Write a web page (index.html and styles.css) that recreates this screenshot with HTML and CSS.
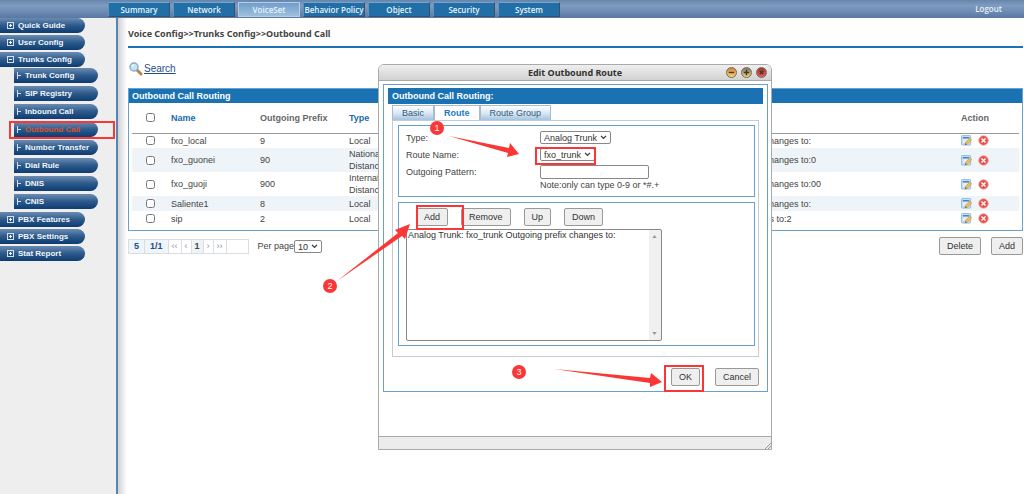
FILE: index.html
```html
<!DOCTYPE html>
<html lang="en">
<head>
  <meta charset="UTF-8">
  <meta name="viewport" content="width=device-width, initial-scale=1.0">
  <title>Outbound Call</title>
  <link rel="stylesheet" href="styles.css">
</head>
<body>
  <svg class="defs" width="0" height="0" aria-hidden="true">
    <symbol id="icon-edit" viewBox="0 0 12 12">
      <rect x="0.5" y="0.5" width="10" height="10.5" rx="1" fill="#c5def3" stroke="#8db8de"/>
      <path d="M2 3h7" stroke="#3f7fc4" stroke-width="1.5"/>
      <path d="M2 5.5h5M2 7.5h3" stroke="#fff"/>
      <path d="M4.5 10.5l.7-2.7 4.5-4.3 2 1.8-4.6 4.5z" fill="#f2c14e" stroke="#b98a35" stroke-width=".6"/>
      <path d="M4.2 11l.8-2 1.3 1.3z" fill="#6d563c"/>
    </symbol>
    <symbol id="icon-delete" viewBox="0 0 12 12">
      <circle cx="6" cy="6" r="5.2" fill="#e9514d" stroke="#f39a96" stroke-width=".8"/>
      <path d="M3.8 3.8l4.4 4.4M8.2 3.8L3.8 8.2" stroke="#fff" stroke-width="1.5"/>
    </symbol>
  </svg>

  <header class="topbar">
    <nav class="tabs">
      <a href="#">Summary</a>
      <a href="#">Network</a>
      <a href="#" class="active">VoiceSet</a>
      <a href="#">Behavior Policy</a>
      <a href="#">Object</a>
      <a href="#">Security</a>
      <a href="#">System</a>
    </nav>
    <a href="#" class="logout">Logout</a>
  </header>

  <div class="layout">
    <!-- Side menu -->
    <aside class="sidebar">
      <ul class="menu">
        <li><a href="#"><span class="box plus"></span>Quick Guide</a></li>
        <li><a href="#"><span class="box plus"></span>User Config</a></li>
        <li><a href="#"><span class="box"></span>Trunks Config</a>
          <ul class="submenu">
            <li><a href="#"><span class="branch"></span>Trunk Config</a></li>
            <li><a href="#"><span class="branch"></span>SIP Registry</a></li>
            <li><a href="#"><span class="branch"></span>Inbound Call</a></li>
            <li><a href="#" class="current"><span class="branch"></span>Outbound Call</a></li>
            <li><a href="#"><span class="branch"></span>Number Transfer</a></li>
            <li><a href="#"><span class="branch"></span>Dial Rule</a></li>
            <li><a href="#"><span class="branch"></span>DNIS</a></li>
            <li><a href="#"><span class="branch"></span>CNIS</a></li>
          </ul>
        </li>
        <li><a href="#"><span class="box plus"></span>PBX Features</a></li>
        <li><a href="#"><span class="box plus"></span>PBX Settings</a></li>
        <li><a href="#"><span class="box plus"></span>Stat Report</a></li>
      </ul>
    </aside>

    <main class="content">
      <h1>Voice Config&gt;&gt;Trunks Config&gt;&gt;Outbound Call</h1>

      <a href="#" class="search">
        <svg width="14" height="14" viewBox="0 0 14 14" aria-hidden="true">
          <path d="M7.5 7.5l4.5 4.5" stroke="#b98545" stroke-width="3" stroke-linecap="round"/>
          <circle cx="5" cy="5" r="4" fill="#c3e4fa" stroke="#8ba9c4" stroke-width="1.4"/>
          <path d="M3 5a2 2 0 0 1 2-2" stroke="#fff" fill="none"/>
        </svg>
        <span>Search</span>
      </a>

      <!-- Route list -->
      <section class="panel">
        <h2>Outbound Call Routing</h2>
        <div class="panel-body">
          <table>
            <colgroup>
              <col class="c-check"><col class="c-name"><col class="c-prefix"><col class="c-type"><col><col class="c-action">
            </colgroup>
            <thead>
              <tr>
                <th class="check"><input type="checkbox" aria-label="Select all"></th>
                <th class="sort">Name</th>
                <th>Outgoing Prefix</th>
                <th class="sort">Type</th>
                <th></th>
                <th>Action</th>
              </tr>
            </thead>
            <tbody>
              <tr>
                <td class="check"><input type="checkbox" aria-label="fxo_local"></td>
                <td>fxo_local</td><td>9</td><td>Local</td>
                <td class="rule">prefix changes to:</td>
                <td><div class="actions"><button aria-label="Edit"><svg><use href="#icon-edit"/></svg></button><button aria-label="Delete"><svg><use href="#icon-delete"/></svg></button></div></td>
              </tr>
              <tr class="tall">
                <td class="check"><input type="checkbox" aria-label="fxo_guonei"></td>
                <td>fxo_guonei</td><td>90</td><td>National Distance</td>
                <td class="rule">prefix changes to:0</td>
                <td><div class="actions"><button aria-label="Edit"><svg><use href="#icon-edit"/></svg></button><button aria-label="Delete"><svg><use href="#icon-delete"/></svg></button></div></td>
              </tr>
              <tr class="tall">
                <td class="check"><input type="checkbox" aria-label="fxo_guoji"></td>
                <td>fxo_guoji</td><td>900</td><td>International Distance</td>
                <td class="rule">prefix changes to:00</td>
                <td><div class="actions"><button aria-label="Edit"><svg><use href="#icon-edit"/></svg></button><button aria-label="Delete"><svg><use href="#icon-delete"/></svg></button></div></td>
              </tr>
              <tr>
                <td class="check"><input type="checkbox" aria-label="Saliente1"></td>
                <td>Saliente1</td><td>8</td><td>Local</td>
                <td class="rule">prefix changes to:</td>
                <td><div class="actions"><button aria-label="Edit"><svg><use href="#icon-edit"/></svg></button><button aria-label="Delete"><svg><use href="#icon-delete"/></svg></button></div></td>
              </tr>
              <tr>
                <td class="check"><input type="checkbox" aria-label="sip"></td>
                <td>sip</td><td>2</td><td>Local</td>
                <td class="rule">changes to:2</td>
                <td><div class="actions"><button aria-label="Edit"><svg><use href="#icon-edit"/></svg></button><button aria-label="Delete"><svg><use href="#icon-delete"/></svg></button></div></td>
              </tr>
            </tbody>
          </table>
        </div>
      </section>

      <div class="list-footer">
        <div class="pager">
          <span class="info">5</span>
          <span class="info pages">1/1</span>
          <a href="#">‹‹</a>
          <a href="#">‹</a>
          <span class="page">1</span>
          <a href="#">›</a>
          <a href="#">››</a>
          <input type="text" aria-label="Go to page">
        </div>
        <label class="per-page">Per page<select><option>10</option></select></label>
        <div class="list-buttons">
          <button class="btn">Delete</button>
          <button class="btn">Add</button>
        </div>
      </div>
    </main>
  </div>

  <!-- Edit window -->
  <div class="dialog" role="dialog" aria-labelledby="dialog-title">
    <div class="dialog-title">
      <h2 id="dialog-title">Edit Outbound Route</h2>
      <div class="window-buttons">
        <button class="min" aria-label="Minimize"><svg viewBox="0 0 10 10"><path d="M2 5h6" /></svg></button>
        <button class="max" aria-label="Maximize"><svg viewBox="0 0 10 10"><path d="M2 5h6M5 2v6" /></svg></button>
        <button class="close" aria-label="Close"><svg viewBox="0 0 10 10"><path d="M3 3l4 4M7 3L3 7" /></svg></button>
      </div>
    </div>
    <div class="dialog-body">
      <div class="route-form">
        <h3>Outbound Call Routing:</h3>
        <div class="route-tabs">
          <button>Basic</button>
          <button class="active">Route</button>
          <button>Route Group</button>
        </div>
        <div class="tab-panel">
          <div class="group fields">
            <label for="type">Type:</label>
            <select id="type"><option>Analog Trunk</option></select>
            <label for="route-name">Route Name:</label>
            <select id="route-name"><option>fxo_trunk</option></select>
            <label for="pattern">Outgoing Pattern:</label>
            <input type="text" id="pattern">
            <span class="note">Note:only can type 0-9 or *#.+</span>
          </div>
          <div class="group routes">
            <div class="route-buttons">
              <button class="btn">Add</button>
              <button class="btn">Remove</button>
              <button class="btn">Up</button>
              <button class="btn">Down</button>
            </div>
            <select class="route-list" size="8" aria-label="Routes">
              <option>Analog Trunk: fxo_trunk Outgoing prefix changes to:</option>
            </select>
          </div>
        </div>
        <div class="dialog-buttons">
          <button class="btn">OK</button>
          <button class="btn">Cancel</button>
        </div>
      </div>
    </div>
    <div class="dialog-status">
      <svg width="6" height="6" viewBox="0 0 6 6" aria-hidden="true"><path d="M0 6L6 0M3 6l3-3" stroke="#999"/></svg>
    </div>
  </div>

  <!-- Step marks -->
  <svg class="marks" width="1024" height="494" viewBox="0 0 1024 494">
    <g fill="none" stroke="#fb3636" stroke-width="2">
      <rect x="10" y="122" width="104" height="16"/>
      <rect x="536" y="148" width="59" height="16"/>
      <rect x="417" y="206" width="46" height="23"/>
      <rect x="665" y="366" width="38" height="25"/>
    </g>
    <g fill="#fb3636">
      <path d="M449 136l60 12 1-5 9 11-12 3 1-4z"/>
      <path d="M337 281l61-48-3-3 15-6-5 15-3-3z"/>
      <path d="M554 369l96 9 1-5 11 9-12 5v-4z"/>
      <circle cx="437" cy="128" r="7"/>
      <circle cx="330" cy="286" r="7"/>
      <circle cx="519" cy="372" r="7"/>
    </g>
    <g class="mark-text">
      <text x="437" y="131">1</text>
      <text x="330" y="289">2</text>
      <text x="519" y="375">3</text>
    </g>
  </svg>
</body>
</html>
```
FILE: styles.css
```css
* {
  box-sizing: border-box;
}

body {
  margin: 0;
  min-height: 100vh;
  display: flex;
  flex-direction: column;
  position: relative;
  font-family: "Liberation Sans", Arial, sans-serif;
  font-size: 9px;
  line-height: 12px;
  color: #444;
  background: #fff;
}

h1, h2, h3, ul {
  margin: 0;
  padding: 0;
}

ul {
  list-style: none;
}

a {
  text-decoration: none;
}

button, input, select {
  font: inherit;
  color: #333;
  margin: 0;
}

.defs {
  position: absolute;
}

/* Top bar */
.topbar {
  display: flex;
  justify-content: space-between;
  align-items: center;
  height: 18px;
  padding: 0 22px 0 108px;
  background: linear-gradient(#6886ad, #7d9bc0 30%, #7391b8 55%, #5878a2);
  font-family: "Open Sans", "Noto Sans", sans-serif;
  font-weight: 600;
  font-size: 8px;
}

.tabs {
  display: flex;
  gap: 3px;
}

.tabs a {
  width: 62px;
  height: 15px;
  line-height: 13px;
  text-align: center;
  white-space: nowrap;
  color: #e8f3fb;
  background: #216fa6;
  border: 1px solid #3a4f68;
  border-top-color: #71a5c9;
  border-left-color: #5f95bd;
}

.tabs a.active {
  background: linear-gradient(#6f9fcb, #9dbfdc);
  border-color: #b4cde2;
}

.logout {
  color: #e8f0f8;
}

/* Side menu */
.layout {
  display: flex;
  flex: 1;
}

.sidebar {
  width: 118px;
  flex: none;
  background: #eee;
  border-right: 2px solid #5386bb;
}

.menu > li {
  margin-bottom: 2px;
}

.menu a {
  display: flex;
  align-items: center;
  gap: 4px;
  width: 85px;
  height: 15px;
  padding-left: 7px;
  border-radius: 0 8px 8px 0;
  background: linear-gradient(#6c8cb1, #2c5a8c 50%, #0f3c70);
  color: #f2f6fa;
  font-size: 8px;
  font-weight: bold;
}

.submenu {
  display: grid;
  gap: 3px;
  padding: 1px 0 1px 14px;
}

.menu .submenu a {
  width: 84px;
  padding-left: 3px;
}

.menu .submenu a.current {
  color: #d8512c;
}

.box {
  width: 7px;
  height: 7px;
  border: 1px solid #d5dfeb;
  background: linear-gradient(#fff, #fff) center / 3px 1px no-repeat;
}

.box.plus {
  background: linear-gradient(#fff, #fff) center / 3px 1px no-repeat, linear-gradient(#fff, #fff) center / 1px 3px no-repeat;
}

.branch {
  width: 4px;
  height: 7px;
  border-left: 1px solid #d5dfeb;
  background: linear-gradient(#d5dfeb, #d5dfeb) center / 4px 1px no-repeat;
}

/* Content */
.content {
  flex: 1;
  min-width: 0;
  padding: 0 1px 0 10px;
  background: linear-gradient(90deg, #d2d2d2, #fff) left / 9px 100% no-repeat;
}

h1 {
  padding: 10px 0 6px;
  border-bottom: 2px solid #1a72b2;
  font-family: "Noto Sans", sans-serif;
  font-size: 9px;
  line-height: 12px;
}

.search {
  display: flex;
  align-items: center;
  gap: 1px;
  margin: 14px 1px 12px;
  color: #1f4e8c;
  font-size: 10px;
  line-height: 14px;
}

.search span {
  text-decoration: underline;
}

.panel {
  border: 1px solid #66a1d0;
}

.panel h2,
.route-form h3 {
  padding: 0 3px;
  background: #1a72b2;
  color: #fff;
  font-size: 9px;
  line-height: 14px;
}

.panel-body {
  padding: 0 3px 4px;
}

table {
  width: 100%;
  table-layout: fixed;
  border-collapse: collapse;
}

.c-check { width: 36px; }
.c-name, .c-prefix { width: 89px; }
.c-type { width: 64px; }
.c-action { width: 61px; }

th, td {
  height: 15px;
  padding: 0 3px;
  text-align: left;
  vertical-align: middle;
}

th {
  height: 30px;
  color: #666;
  border-bottom: 1px solid #999;
}

th.sort {
  color: #1a6aa8;
}

.tall td {
  height: 24px;
}

tbody tr:nth-child(even) {
  background: #eff4f9;
}

.check {
  text-align: center;
}

input[type="checkbox"] {
  display: block;
  width: 9px;
  height: 9px;
  margin: 0 auto;
}

td.rule {
  padding-left: 330px;
  white-space: nowrap;
}

.actions {
  display: flex;
  gap: 6px;
}

.actions button {
  width: 11px;
  height: 11px;
  padding: 0;
  border: 0;
  background: none;
}

.actions svg {
  display: block;
  width: 11px;
  height: 11px;
}

.list-footer {
  display: flex;
  align-items: center;
  padding-top: 6px;
}

.pager {
  display: flex;
  height: 15px;
  border: 1px solid #ddd;
  line-height: 13px;
  font-weight: bold;
}

.pager > * {
  padding: 0 3px;
  border-right: 1px solid #ddd;
}

.pager .info {
  background: #eef6fc;
  color: #1d4f85;
  padding: 0 5px;
}

.pager a {
  color: #8093ad;
  font-weight: normal;
}

.pager .page {
  background: #eef3f7;
}

.pager input {
  width: 21px;
  height: 13px;
  border: 0;
}

.per-page {
  display: flex;
  align-items: center;
  margin-left: 9px;
}

.list-buttons {
  display: flex;
  gap: 10px;
  margin-left: auto;
}

.btn {
  height: 18px;
  padding: 0 7px;
  border: 1px solid #999;
  border-radius: 2px;
  background: #efefef;
}

select {
  appearance: none;
  height: 13px;
  padding: 0 12px 0 3px;
  border: 1px solid #888;
  border-radius: 2px;
  background: #fff url("data:image/svg+xml,%3Csvg xmlns='http://www.w3.org/2000/svg' viewBox='0 0 8 6'%3E%3Cpath d='M1 1l3 3 3-3' fill='none' stroke='%23333' stroke-width='1.5'/%3E%3C/svg%3E") right 3px center / 7px 5px no-repeat;
}

/* Edit window */
.dialog {
  position: absolute;
  left: 378px;
  top: 64px;
  width: 394px;
  border: 1px solid #aaa;
  border-radius: 6px 6px 0 0;
  background: #fff;
}

.dialog-title {
  display: grid;
  grid-template-columns: 1fr auto 1fr;
  align-items: center;
  height: 16px;
  padding: 0 4px;
  border-bottom: 1px solid #aaa;
  border-radius: 5px 5px 0 0;
  background: linear-gradient(#efefef, #d2d2d2);
}

.dialog-title h2 {
  grid-column: 2;
  font-family: "Noto Sans", sans-serif;
  font-size: 9px;
  line-height: 14px;
  color: #333;
}

.window-buttons {
  display: flex;
  justify-content: flex-end;
  gap: 4px;
}

.window-buttons button {
  width: 11px;
  height: 11px;
  padding: 0;
  border: 1px solid #7c6a56;
  border-radius: 50%;
}

.window-buttons svg {
  display: block;
  stroke: #4d3520;
  stroke-width: 1.5;
}

.min { background: linear-gradient(#c98343, #f7d66f); }
.max { background: linear-gradient(#777, #edd474); }
.close { background: linear-gradient(#993a33, #ee5c5c); }

.dialog-body {
  padding: 3px 3px 44px 4px;
}

.route-form {
  padding: 3px 4px 4px;
  border: 1px solid #66a1d0;
}

.route-form h3 {
  padding: 0 4px;
  line-height: 16px;
}

.route-tabs {
  display: flex;
  margin: 1px 4px 0;
}

.route-tabs button {
  height: 15px;
  padding: 0 9px;
  border: 1px solid #a9bccd;
  border-bottom: 0;
  background: linear-gradient(#fff, #dbe8f3 50%, #a5c4df);
  color: #33597d;
}

.route-tabs .active {
  background: #fff;
  color: #1a7ac4;
  font-weight: bold;
}

.tab-panel {
  display: grid;
  gap: 5px;
  margin: 0 4px;
  padding: 4px 3px 10px 5px;
  border: 1px solid #c2ccd6;
}

.group {
  border: 1px solid #66a1d0;
}

.fields {
  display: grid;
  grid-template-columns: 134px 1fr;
  align-items: center;
  justify-items: start;
  row-gap: 4px;
  padding: 5px 7px;
}

.fields input {
  width: 109px;
  height: 14px;
  border: 1px solid #888;
  border-radius: 2px;
}

.fields .note {
  grid-column: 2;
  margin-top: -4px;
}

.routes {
  padding: 5px 7px 4px;
}

.route-buttons {
  display: flex;
  gap: 13px;
  margin: 0 0 3px 10px;
}

.route-list {
  display: block;
  width: 256px;
  height: 112px;
  padding: 0;
  background:
    url("data:image/svg+xml,%3Csvg xmlns='http://www.w3.org/2000/svg' viewBox='0 0 6 4'%3E%3Cpath d='M0 4l3-4 3 4z' fill='%23999'/%3E%3C/svg%3E") right 4px top 5px / 5px 3px no-repeat,
    url("data:image/svg+xml,%3Csvg xmlns='http://www.w3.org/2000/svg' viewBox='0 0 6 4'%3E%3Cpath d='M0 0l3 4 3-4z' fill='%23999'/%3E%3C/svg%3E") right 4px bottom 5px / 5px 3px no-repeat,
    linear-gradient(#f0f0f0, #f0f0f0) right / 12px 100% no-repeat,
    #fff;
}

.route-list option {
  padding: 0 1px;
  min-height: 0;
}

.dialog-buttons {
  display: flex;
  justify-content: flex-end;
  gap: 15px;
  padding: 11px 4px 1px;
}

.dialog-status {
  display: flex;
  justify-content: flex-end;
  align-items: flex-end;
  height: 13px;
  border-top: 1px solid #aaa;
  background: #ececec;
}

/* Step marks */
.marks {
  position: absolute;
  left: 0;
  top: 0;
  pointer-events: none;
}

.mark-text {
  fill: #fff;
  font-size: 9px;
  text-anchor: middle;
}
```
